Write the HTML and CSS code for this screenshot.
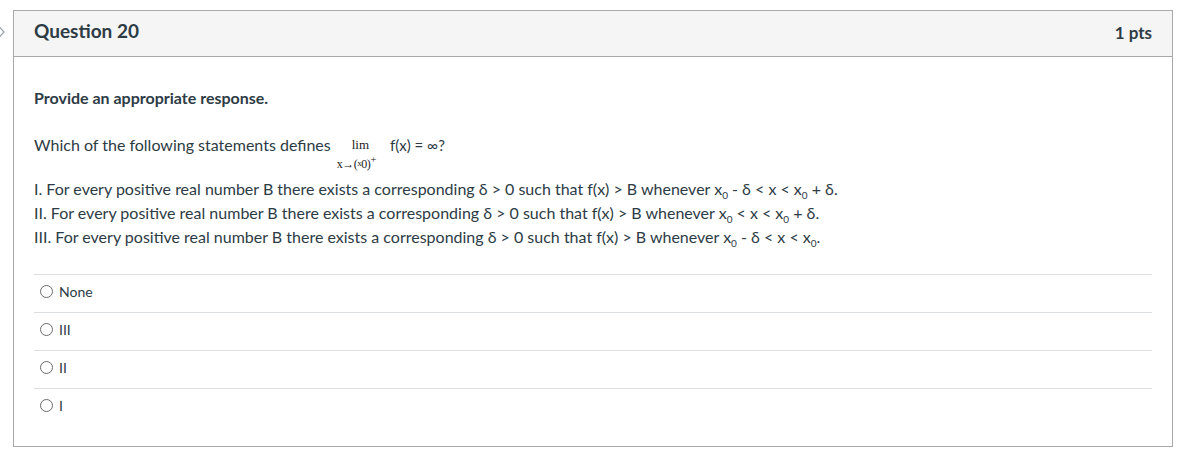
FILE: index.html
```html
<!DOCTYPE html>
<html lang="en">
<head>
<meta charset="utf-8">
<title>Question 20</title>
<link rel="stylesheet" href="styles.css">
</head>
<body>
<div class="page">
  <svg class="nav-chevron" width="10" height="16" viewBox="0 0 10 16" aria-hidden="true"><path d="M1 1.5 L7 8 L1 14.5" fill="none" stroke="#9aa3a9" stroke-width="1.3"/></svg>
  <div class="card">
    <div class="card-header">
      <h2 class="q-title">Question 20</h2>
      <span class="q-pts">1 pts</span>
    </div>
    <div class="card-body">
      <p class="prompt">Provide an appropriate response.</p>
      <div class="which">
        <span>Which of the following statements defines</span>
        <span class="lim">
          <span class="lim-word">lim</span>
          <span class="lim-sub">x&#8594;(<span class="tiny">x</span>0)<sup>+</sup></span>
        </span>
        <span class="fx">f(x) = &#8734;?</span>
      </div>
      <div class="statements">
        <div>I. For every positive real number B there exists a corresponding &#948; &gt; 0 such that f(x) &gt; B whenever x<sub>0</sub> - &#948; &lt; x &lt; x<sub>0</sub> + &#948;.</div>
        <div>II. For every positive real number B there exists a corresponding &#948; &gt; 0 such that f(x) &gt; B whenever x<sub>0</sub> &lt; x &lt; x<sub>0</sub> + &#948;.</div>
        <div>III. For every positive real number B there exists a corresponding &#948; &gt; 0 such that f(x) &gt; B whenever x<sub>0</sub> - &#948; &lt; x &lt; x<sub>0</sub>.</div>
      </div>
      <div class="answers">
        <label class="answer"><span class="radio"></span><span>None</span></label>
        <label class="answer"><span class="radio"></span><span>III</span></label>
        <label class="answer"><span class="radio"></span><span>II</span></label>
        <label class="answer"><span class="radio"></span><span>I</span></label>
      </div>
    </div>
  </div>
</div>
</body>
</html>
```
FILE: styles.css
```css
* { box-sizing: border-box; }
html, body { margin: 0; padding: 0; background: #fff; }
body {
  font-family: Lato, "Noto Sans", "Liberation Sans", sans-serif;
  color: #2d3b45;
  font-size: 16px;
}
.page {
  position: relative;
  padding: 10px 0 0 13px;
}
.nav-chevron {
  position: absolute;
  left: -3px;
  top: 24px;
}
.card {
  width: 1160px;
  border: 1px solid #a8a8a8;
}
.card-header {
  height: 46px;
  background: #f5f5f5;
  border-bottom: 1px solid #a8a8a8;
  display: flex;
  align-items: center;
  justify-content: space-between;
  padding: 0 20px 3px;
}
.q-title {
  margin: 0 0 3px;
  font-size: 19px;
  font-weight: 700;
  color: #2d3b45;
}
.q-pts {
  font-size: 17px;
  font-weight: 700;
  color: #2d3b45;
}
.card-body {
  padding: 29px 20px 20px;
}
.prompt {
  margin: 0;
  font-weight: 700;
  line-height: 24px;
}
.which {
  margin-top: 23px;
  display: flex;
  align-items: flex-start;
  line-height: 24px;
  height: 44px;
}
.lim {
  display: flex;
  flex-direction: column;
  align-items: center;
  margin-left: 6px;
  font-family: "Liberation Serif", "DejaVu Serif", serif;
  color: #222;
}
.lim-word {
  font-size: 13px;
  line-height: 24px;
  padding-left: 8px;
}
.lim-sub {
  font-size: 12px;
  line-height: 16px;
  margin-top: -2px;
  letter-spacing: -0.5px;
}
.lim-sub .tiny { font-size: 9px; vertical-align: 2px; }
.lim-sub sup { font-size: 11px; vertical-align: 5px; line-height: 0; }
.fx {
  margin-left: 14px;
  font-size: 15px;
}
.statements {
  line-height: 24px;
}
.statements sub {
  font-size: 10px;
  line-height: 0;
  vertical-align: -4px;
}
.answers {
  margin-top: 25px;
}
.answer {
  display: flex;
  align-items: center;
  gap: 6px;
  height: 38px;
  border-top: 1px solid #dcdfe1;
  padding: 0 0 4px 6px;
  font-size: 14px;
  color: #2d3b45;
}
.radio {
  width: 13px;
  height: 13px;
  border: 1px solid #6b6b6b;
  border-radius: 50%;
  flex: none;
}
```
